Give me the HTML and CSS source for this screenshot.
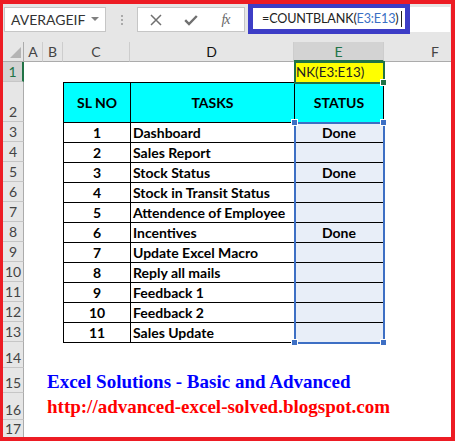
FILE: index.html
```html
<!DOCTYPE html>
<html>
<head>
<meta charset="utf-8">
<link rel="stylesheet" href="styles.css">
</head>
<body>
<div class="frame">
  <div class="toolbar">
    <div class="namebox"><span>AVERAGEIF</span><span class="dropdown"></span></div>
    <div class="grip"><i></i><i></i><i></i></div>
    <div class="fbtns">
      <div class="fbtn"><svg width="12" height="12" viewBox="0 0 12 12"><path d="M1 1L11 11M11 1L1 11" stroke="#707070" stroke-width="1.5"/></svg></div>
      <div class="fbtn"><svg width="14" height="12" viewBox="0 0 14 12"><path d="M1.2 6.2L5 10L12.8 2" stroke="#707070" stroke-width="2.4" fill="none"/></svg></div>
      <div class="fbtn fx">fx</div>
    </div>
    <div class="fwrap">=COUNTBLANK(<span class="ref">E3:E13</span>)<span class="cursor"></span></div>
    <div class="frest"></div>
  </div>
  <div class="sheet">
    <div class="row r20 hdr">
      <div class="corner"><svg width="11" height="11" viewBox="0 0 11 11"><path d="M11 0V11H0Z" fill="#b4b4b4"/></svg></div>
      <div class="ch">A</div><div class="ch">B</div><div class="ch">C</div><div class="ch dk">D</div><div class="ch act">E</div><div class="ch f">F</div>
    </div>
    <div class="row r20">
      <div class="rh act">1</div><div></div><div></div><div></div><div></div><div class="c e1">NK(E3:E13)</div><div></div>
    </div>
    <div class="row r40">
      <div class="rh">2</div><div></div><div></div><div class="c t th">SL NO</div><div class="c t th">TASKS</div><div class="c t th tr">STATUS</div><div></div>
    </div>
    <div class="row r20"><div class="rh">3</div><div></div><div></div><div class="c t n">1</div><div class="c t d">Dashboard</div><div class="c t s">Done</div><div></div></div>
    <div class="row r20"><div class="rh">4</div><div></div><div></div><div class="c t n">2</div><div class="c t d">Sales Report</div><div class="c t s"></div><div></div></div>
    <div class="row r20"><div class="rh">5</div><div></div><div></div><div class="c t n">3</div><div class="c t d">Stock Status</div><div class="c t s">Done</div><div></div></div>
    <div class="row r20"><div class="rh">6</div><div></div><div></div><div class="c t n">4</div><div class="c t d">Stock in Transit Status</div><div class="c t s"></div><div></div></div>
    <div class="row r20"><div class="rh">7</div><div></div><div></div><div class="c t n">5</div><div class="c t d">Attendence of Employee</div><div class="c t s"></div><div></div></div>
    <div class="row r20"><div class="rh">8</div><div></div><div></div><div class="c t n">6</div><div class="c t d">Incentives</div><div class="c t s">Done</div><div></div></div>
    <div class="row r20"><div class="rh">9</div><div></div><div></div><div class="c t n">7</div><div class="c t d">Update Excel Macro</div><div class="c t s"></div><div></div></div>
    <div class="row r20"><div class="rh">10</div><div></div><div></div><div class="c t n">8</div><div class="c t d">Reply all mails</div><div class="c t s"></div><div></div></div>
    <div class="row r20"><div class="rh">11</div><div></div><div></div><div class="c t n">9</div><div class="c t d">Feedback 1</div><div class="c t s"></div><div></div></div>
    <div class="row r20"><div class="rh">12</div><div></div><div></div><div class="c t n">10</div><div class="c t d">Feedback 2</div><div class="c t s"></div><div></div></div>
    <div class="row r20"><div class="rh">13</div><div></div><div></div><div class="c t n">11</div><div class="c t d">Sales Update</div><div class="c t s"></div><div></div></div>
    <div class="row r26"><div class="rh">14</div><div></div><div></div><div class="c tb"></div><div class="c tb"></div><div class="c tb"></div><div></div></div>
    <div class="row r25"><div class="rh">15</div><div></div><div class="c txt blue">Excel Solutions - Basic and Advanced</div></div>
    <div class="row r27"><div class="rh">16</div><div></div><div class="c txt red">http://advanced-excel-solved.blogspot.com</div></div>
    <div class="row rlast"><div class="rh">17</div><div></div></div>

    <div class="sel"></div>
    <div class="handle blueh hl-tl"></div>
    <div class="handle blueh hl-tr"></div>
    <div class="handle blueh hl-bl"></div>
    <div class="handle blueh hl-br"></div>
    <div class="actbox"></div>
    <div class="handle greenh"></div>
  </div>
</div>
</body>
</html>
```

FILE: styles.css
```css
* { box-sizing: border-box; margin: 0; padding: 0; }
html, body { width: 455px; height: 441px; overflow: hidden; background: #fff; }
body { font-family: Lato, "Open Sans", sans-serif; }

.frame {
  width: 455px; height: 441px;
  border: 4px solid #ed1c24; border-left-width: 3px;
  background: #fff;
  display: flex; flex-direction: column;
}

/* formula bar */
.toolbar {
  flex: none; height: 38px; background: #e6e6e6;
  display: flex; align-items: flex-start;
}
.namebox {
  margin: 3px 0 0 1px; width: 102px; height: 25px;
  background: #fff; border: 1px solid #c6c6c6;
  display: flex; align-items: center; justify-content: space-between;
  padding: 0 6px 0 6px; font-size: 14px; color: #333;
}
.dropdown {
  width: 0; height: 0; margin-top: -2px;
  border-left: 4px solid transparent; border-right: 4px solid transparent;
  border-top: 4px solid #808080;
}
.grip {
  width: 31px; height: 30px; padding-top: 11px;
  display: flex; flex-direction: column; align-items: center; gap: 2px;
}
.grip i { display: block; width: 2px; height: 2px; background: #aaa; }
.fbtns {
  margin-top: 3px; width: 108px; height: 25px;
  background: #fff; border: 1px solid #c6c6c6;
  display: flex;
}
.fbtn { width: 35px; display: flex; align-items: center; justify-content: center; }
.fx { font-family: "Liberation Serif", serif; font-style: italic; font-size: 14px; color: #666; letter-spacing: -1px; }
.fwrap {
  margin-left: 3px; width: 162px; height: 30px;
  background: #fff; border: 5px solid #3d3dc6; border-top-width: 4px;
  display: flex; align-items: center; padding-left: 9px;
  font-size: 12.6px; letter-spacing: -0.15px; color: #222; white-space: nowrap; overflow: hidden;
}
.ref { color: #3a6fc4; }
.cursor { width: 1px; height: 16px; background: #222; margin-left: 2px; }
.frest { flex: 1; margin: 3px 1px 0 0; height: 25px; background: #fff; }

/* sheet */
.sheet { position: relative; flex: 1; display: flex; flex-direction: column; overflow: hidden; }
.row {
  flex: none; display: grid;
  grid-template-columns: 21px 19px 20px 67px 164px 90px 1fr;
}
.r20 { height: 20px; }
.r40 { height: 40px; }
.r26 { height: 26px; }
.r25 { height: 25px; }
.r27 { height: 27px; }
.rlast { flex: 1; }

.hdr > div {
  background: #e6e6e6; border-bottom: 1px solid #ababab; border-right: 1px solid #cdcdcd;
  display: flex; align-items: center; justify-content: center;
  font-size: 14px; color: #444;
}
.hdr .corner { align-items: flex-end; justify-content: flex-end; padding: 0 2px 3px 0; border-right: 1px solid #ababab; }
.hdr .dk { color: #111; }
.hdr .act { background: #d3d3d3; color: #217346; border-bottom: 2px solid #217346; }
.hdr .f { justify-content: flex-start; padding-left: 47px; border-right: none; }

.rh {
  background: #e6e6e6; border-right: 1px solid #ababab; border-bottom: 1px solid #c6c6c6;
  display: flex; align-items: flex-end; justify-content: center;
  font-size: 14px; line-height: 18px; color: #444;
}
.rh.act { background: #d3d3d3; color: #217346; border-right: 2px solid #217346; }

.c {
  display: flex; align-items: flex-end; white-space: nowrap;
  font-size: 14px; line-height: 18px; color: #000;
}
.t { border-top: 1px solid #000; border-left: 1px solid #000; font-weight: 700; }
.tb { border-top: 1px solid #000; }
.tr, .s { border-right: 1px solid #000; }
.th { background: #00ffff; align-items: center; justify-content: center; line-height: 20px; }
.n { justify-content: center; }
.d { padding-left: 2px; }
.s { justify-content: center; background: #e8eef8; }
.e1 { background: #ffff00; padding-left: 2px; overflow: hidden; color: #222; line-height: 19px; font-size: 13.4px; }

.txt { grid-column: 3 / -1; padding-left: 4px; font-family: "Liberation Serif", serif; font-weight: 700; font-size: 19px; line-height: 19px; }
.blue { color: #0000ff; padding-bottom: 2px; }
.red { color: #ff0000; padding-bottom: 4px; }

/* overlays */
.sel {
  position: absolute; left: 291px; top: 80px; width: 91px; height: 222px;
  border: 2px solid #3d6fc4;
}
.actbox {
  position: absolute; left: 291px; top: 19px; width: 91px; height: 23px;
  border: 2px solid #217346;
}
.handle { position: absolute; width: 7px; height: 7px; border: 1px solid #fff; }
.blueh { background: #3d6fc4; }
.hl-tl { left: 288px; top: 77px; }
.hl-tr { left: 377px; top: 77px; }
.hl-bl { left: 288px; top: 297px; }
.hl-br { left: 377px; top: 297px; }
.greenh { background: #217346; left: 377px; top: 37px; width: 7px; height: 7px; }
```
